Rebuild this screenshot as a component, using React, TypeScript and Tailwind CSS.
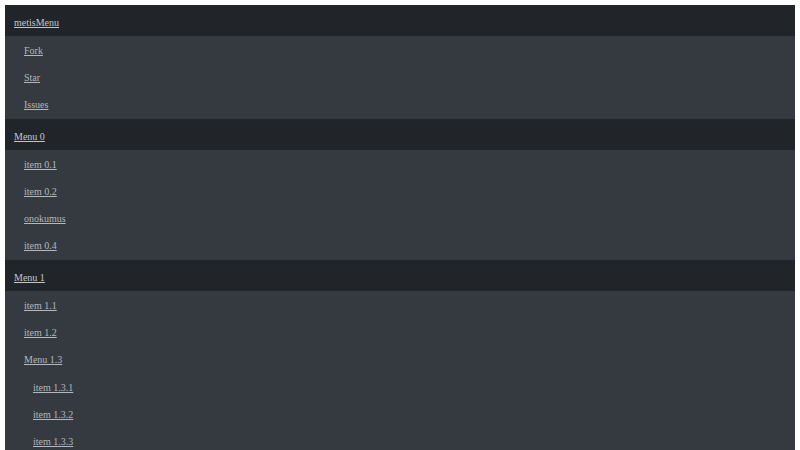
import React from "react";

const font = { fontFamily: '"Liberation Serif", "Times New Roman", serif' };

function Header({ label }: { label: string }) {
  return (
    <li className="bg-[#212529]">
      <a href="#" className="flex h-[31px] items-center pl-[9px] pt-[3px] text-[10px] text-[#c3c7cb] underline">
        {label}
      </a>
    </li>
  );
}

function Item({ label, indent = 19 }: { label: string; indent?: number }) {
  return (
    <li>
      <a
        href="#"
        className={`flex h-[27px] items-center text-[10px] text-[#b3b8bd] underline ${indent === 28 ? "pl-[28px]" : "pl-[19px]"}`}
      >
        {label}
      </a>
    </li>
  );
}

function Group({ children }: { children: React.ReactNode }) {
  return <ul className="bg-[#343a40] py-px">{children}</ul>;
}

export default function App() {
  return (
    <div className="min-h-[450px] bg-white p-[5px]" style={font}>
      <ul className="w-[790px] bg-[#343a40]">
        <Header label="metisMenu" />
        <li>
          <Group>
            <Item label="Fork" />
            <Item label="Star" />
            <Item label="Issues" />
          </Group>
        </li>
        <Header label="Menu 0" />
        <li>
          <Group>
            <Item label="item 0.1" />
            <Item label="item 0.2" />
            <Item label="onokumus" />
            <Item label="item 0.4" />
          </Group>
        </li>
        <Header label="Menu 1" />
        <li>
          <Group>
            <Item label="item 1.1" />
            <Item label="item 1.2" />
            <Item label="Menu 1.3" />
            <li>
              <ul className="py-px">
                <Item label="item 1.3.1" indent={28} />
                <Item label="item 1.3.2" indent={28} />
                <Item label="item 1.3.3" indent={28} />
                <Item label="item 1.3.4" indent={28} />
              </ul>
            </li>
          </Group>
        </li>
      </ul>
    </div>
  );
}
